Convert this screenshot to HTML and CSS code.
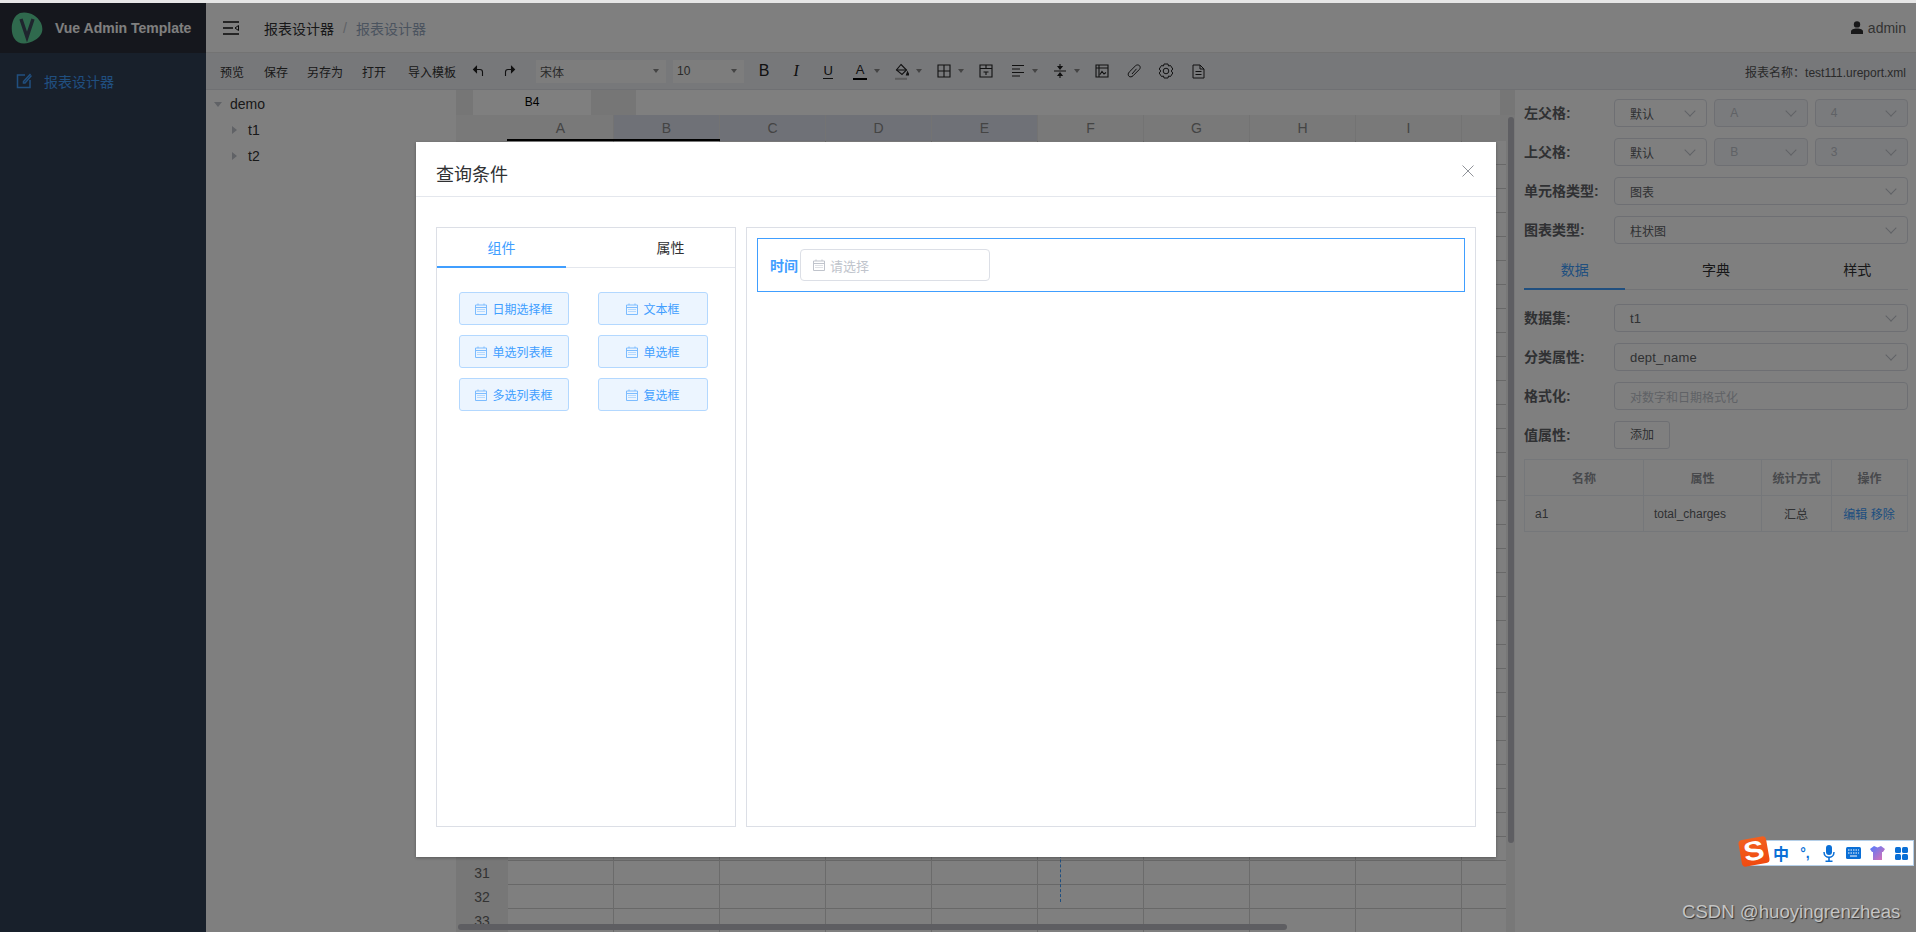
FILE: index.html
```html
<!DOCTYPE html>
<html lang="en">
<head>
<meta charset="UTF-8" />
<meta name="viewport" content="width=device-width, initial-scale=1.0" />
<title>报表设计器</title>
<link rel="stylesheet" href="styles.css">
</head>
<body>
  <div class="top-strip"></div>
  <div class="shell">
    <aside class="sidebar">
      <div class="brand">
        <svg class="brand-logo" width="32" height="32" viewBox="0 0 32 32">
          <path d="M9 1C17 -1 26 3 30 11C33 18 31 24 24 28C16 33 7 33 3 26C-1 19 0 5 9 1Z" fill="#5fd39a"/>
          <path d="M10 7L16 25L22 7" fill="none" stroke="#3f4a5c" stroke-width="3.4"/>
        </svg>
        <span class="brand-name">Vue Admin Template</span>
      </div>
      <div class="side-item">
        <svg width="16" height="16" viewBox="0 0 16 16" fill="none" stroke="#409eff" stroke-width="1.5">
          <path d="M9 2H1.5V14.5H14V7"/>
          <path d="M14.5 1L7.5 8.5V10H9L15.5 2.5"/>
        </svg>
        <span>报表设计器</span>
      </div>
    </aside>

    <main class="main">
      <header class="navbar">
        <svg class="hamburger" width="16" height="14" viewBox="0 0 16 14" fill="none" stroke="#111" stroke-width="1.6">
          <path d="M0 1H16M0 7H10M0 13H16"/>
          <path d="M15.5 4.5L12 7L15.5 9.5Z" stroke-width="1"/>
        </svg>
        <span class="crumb">报表设计器</span>
        <span class="crumb-sep">/</span>
        <span class="crumb crumb-last">报表设计器</span>
        <div class="user">
          <svg width="12" height="13" viewBox="0 0 12 13" fill="#303133">
            <circle cx="6" cy="3.4" r="3.2"/>
            <path d="M0 13V10.5C0 8.5 2.5 7.5 6 7.5C9.5 7.5 12 8.5 12 10.5V13Z"/>
          </svg>
          <span>admin</span>
        </div>
      </header>

      <div class="toolbar">
        <span class="tool-text t-view">预览</span>
        <span class="tool-text t-save">保存</span>
        <span class="tool-text t-saveas">另存为</span>
        <span class="tool-text t-open">打开</span>
        <span class="tool-text t-import">导入模板</span>
        <svg class="tool-undo" width="14" height="14" viewBox="0 0 14 14" fill="none" stroke="#222" stroke-width="1.1">
          <path d="M11.500 12V8C11.500 6.500 10.500 5.500 9 5.500H4"/><path d="M5.500 2.500L2.500 5.500L5.500 8.500Z" fill="#222"/>
        </svg>
        <svg class="tool-redo" width="14" height="14" viewBox="0 0 14 14" fill="none" stroke="#222" stroke-width="1.1">
          <path d="M2.500 12V8C2.500 6.500 3.500 5.500 5 5.500H10"/><path d="M8.500 2.500L11.500 5.500L8.500 8.500Z" fill="#222"/>
        </svg>
        <div class="tool-select font-name"><span>宋体</span><i class="caret"></i></div>
        <div class="tool-select font-size"><span>10</span><i class="caret"></i></div>

        <div class="tool"><span class="glyph">B</span></div>
        <div class="tool"><span class="glyph glyph-i">I</span></div>
        <div class="tool"><span class="glyph glyph-u">U</span></div>
        <div class="tool tool-drop"><span class="glyph glyph-a">A</span><i class="caret"></i></div>
        <div class="tool tool-drop">
          <svg width="14" height="17" viewBox="0 0 14 17" fill="none" stroke="#222" stroke-width="1.1">
            <path d="M6 1.500L11.500 7L7 11.500L1.500 7Z"/><path d="M1.500 7H11.500" /><path d="M12.500 9L14 12H11.500Z" fill="#222"/>
            <path d="M0 15.800H12" stroke="#b8b8b8" stroke-width="2"/>
          </svg><i class="caret"></i>
        </div>
        <div class="tool tool-drop">
          <svg width="14" height="14" viewBox="0 0 14 14" fill="none" stroke="#222" stroke-width="1.1">
            <path d="M1 1H13V13H1ZM7 1V13M1 7H13"/>
          </svg><i class="caret"></i>
        </div>
        <div class="tool">
          <svg width="14" height="14" viewBox="0 0 14 14" fill="none" stroke="#222" stroke-width="1.1">
            <path d="M1 1H13V13H1ZM1 4.500H13M7 1V4.500M4.500 8H9.500M7 8V11"/>
          </svg>
        </div>
        <div class="tool tool-drop">
          <svg width="14" height="14" viewBox="0 0 14 14" fill="none" stroke="#222" stroke-width="1.1">
            <path d="M1 1.500H13M1 5H9M1 8.500H13M1 12H9"/>
          </svg><i class="caret"></i>
        </div>
        <div class="tool tool-drop">
          <svg width="14" height="16" viewBox="0 0 14 16" fill="none" stroke="#222" stroke-width="1.1">
            <path d="M1 8H13M7 1V5M7 11V15"/><path d="M5 3.500L7 6L9 3.500ZM5 12.500L7 10L9 12.500Z" fill="#222"/>
          </svg><i class="caret"></i>
        </div>
        <div class="tool">
          <svg width="14" height="14" viewBox="0 0 14 14" fill="none" stroke="#222" stroke-width="1.1">
            <path d="M1 1H13V13H1ZM1 4H13M4 1V13M5 10.500L7 7.500L9 10L11 8.500"/>
          </svg>
        </div>
        <div class="tool">
          <svg width="14" height="14" viewBox="0 0 14 14" fill="none" stroke="#222" stroke-width="1">
            <path d="M8.500 1.800C9.800 .6 11.500 .7 12.500 1.700C13.500 2.800 13.400 4.400 12.300 5.500L6 11.800C4.800 13 3 13.300 1.900 12.200C.8 11 1 9.300 2.200 8.100L8.500 1.800M5 10L9.500 4.800"/>
          </svg>
        </div>
        <div class="tool">
          <svg width="16" height="16" viewBox="0 0 16 16" fill="none" stroke="#222" stroke-width="1">
            <path d="M6 1H10L10.500 3L12.500 2.500L14.800 6L13.200 8L14.800 10L12.500 13.500L10.500 13L10 15H6L5.500 13L3.500 13.500L1.200 10L2.800 8L1.200 6L3.500 2.500L5.500 3Z"/><circle cx="8" cy="8" r="2.800"/>
          </svg>
        </div>
        <div class="tool">
          <svg width="13" height="15" viewBox="0 0 13 15" fill="none" stroke="#222" stroke-width="1">
            <path d="M1 1H8L12 5V14H1ZM8 1V5H12M3.500 7.500H9.500M3.500 10.500H9.500"/>
          </svg>
        </div>
        <span class="report-name">报表名称：test111.ureport.xml</span>
      </div>

      <div class="workspace">
        <div class="tree">
          <div class="tree-row"><i class="tree-down"></i><span>demo</span></div>
          <div class="tree-row tree-child"><i class="tree-right"></i><span>t1</span></div>
          <div class="tree-row tree-child"><i class="tree-right"></i><span>t2</span></div>
        </div>

        <div class="sheet">
          <div class="name-bar">
            <span class="name-box">B4</span>
            <span class="name-gap"></span>
            <span class="formula"></span>
          </div>
          <div class="col-head">
            <span class="corner"></span>
            <span class="col">A</span>
            <span class="col col-on">B</span>
            <span class="col col-on">C</span>
            <span class="col col-on">D</span>
            <span class="col col-on">E</span>
            <span class="col">F</span>
            <span class="col">G</span>
            <span class="col">H</span>
            <span class="col">I</span>
          </div>
          <div class="grid-wrap">
            <div class="row-nums">
              <span>31</span><span>32</span><span>33</span>
            </div>
            <div class="cells"></div>
          </div>
          <div class="sel-line"></div>
          <div class="dash-line"></div>
          <div class="scroll-v"></div>
          <div class="scroll-h"></div>
        </div>

        <div class="props">
          <div class="prop-row">
            <label>左父格:</label>
            <div class="select"><span>默认</span><i class="chev"></i></div>
            <div class="select is-disabled"><span>A</span><i class="chev"></i></div>
            <div class="select is-disabled"><span>4</span><i class="chev"></i></div>
          </div>
          <div class="prop-row">
            <label>上父格:</label>
            <div class="select"><span>默认</span><i class="chev"></i></div>
            <div class="select is-disabled"><span>B</span><i class="chev"></i></div>
            <div class="select is-disabled"><span>3</span><i class="chev"></i></div>
          </div>
          <div class="prop-row">
            <label>单元格类型:</label>
            <div class="select"><span>图表</span><i class="chev"></i></div>
          </div>
          <div class="prop-row">
            <label>图表类型:</label>
            <div class="select"><span>柱状图</span><i class="chev"></i></div>
          </div>
          <div class="prop-tabs">
            <span class="prop-tab is-active">数据</span>
            <span class="prop-tab">字典</span>
            <span class="prop-tab">样式</span>
          </div>
          <div class="prop-row">
            <label>数据集:</label>
            <div class="select"><span class="latin">t1</span><i class="chev"></i></div>
          </div>
          <div class="prop-row">
            <label>分类属性:</label>
            <div class="select"><span class="latin">dept_name</span><i class="chev"></i></div>
          </div>
          <div class="prop-row">
            <label>格式化:</label>
            <div class="select"><span class="placeholder">对数字和日期格式化</span></div>
          </div>
          <div class="prop-row">
            <label>值属性:</label>
            <div class="add-btn">添加</div>
          </div>
          <table class="value-table">
            <tr><th class="w-name">名称</th><th class="w-attr">属性</th><th class="w-stat">统计方式</th><th>操作</th></tr>
            <tr><td>a1</td><td>total_charges</td><td class="center">汇总</td><td class="center"><a>编辑</a> <a>移除</a></td></tr>
          </table>
        </div>
      </div>
    </main>
  </div>

  <div class="mask"></div>

  <div class="dialog">
    <div class="dialog-head">
      <span class="dialog-title">查询条件</span>
      <svg class="dialog-close" width="12" height="12" viewBox="0 0 12 12" stroke="#909399" stroke-width="1"><path d="M.5 .5L11.500 11.500M11.500 .5L.5 11.500"/></svg>
    </div>
    <div class="dialog-body">
      <div class="panel-left">
        <div class="dlg-tabs">
          <span class="dlg-tab is-active">组件</span>
          <span class="dlg-tab">属性</span>
        </div>
        <div class="comp-grid">
          <div class="comp-btn"><svg class="cal" viewBox="0 0 12 12"><use href="#cal"/></svg>日期选择框</div>
          <div class="comp-btn"><svg class="cal" viewBox="0 0 12 12"><use href="#cal"/></svg>文本框</div>
          <div class="comp-btn"><svg class="cal" viewBox="0 0 12 12"><use href="#cal"/></svg>单选列表框</div>
          <div class="comp-btn"><svg class="cal" viewBox="0 0 12 12"><use href="#cal"/></svg>单选框</div>
          <div class="comp-btn"><svg class="cal" viewBox="0 0 12 12"><use href="#cal"/></svg>多选列表框</div>
          <div class="comp-btn"><svg class="cal" viewBox="0 0 12 12"><use href="#cal"/></svg>复选框</div>
        </div>
      </div>
      <div class="panel-right">
        <div class="form-item">
          <span class="form-label">时间</span>
          <div class="date-input"><svg class="cal cal-gray" viewBox="0 0 12 12"><use href="#cal"/></svg>请选择</div>
        </div>
      </div>
    </div>
  </div>

  <svg class="defs" width="0" height="0">
    <symbol id="cal" viewBox="0 0 12 12">
      <path d="M.5 2H11.500V11.500H.5ZM.5 4.500H11.500M3 .5V2M9 .5V2" fill="none" stroke="currentColor"/>
      <path d="M2.500 6.500H9.500M2.500 8.500H9.500" stroke="currentColor" stroke-dasharray="1 1"/>
    </symbol>
  </svg>

  <div class="ime">
    <div class="ime-logo"><span>S</span></div>
    <span class="ime-item ime-zh">中</span>
    <span class="ime-item ime-punc">°,</span>
    <span class="ime-item"><svg width="12" height="17" viewBox="0 0 12 17" fill="#0a6fd6"><rect x="3" y="0" width="6" height="10" rx="3"/><path d="M1 7C1 14 11 14 11 7" fill="none" stroke="#0a6fd6" stroke-width="1.500"/><path d="M5.200 12H6.800V15.500H5.200ZM2.500 15.500H9.500V17H2.500Z"/></svg></span>
    <span class="ime-item"><svg width="15" height="12" viewBox="0 0 15 12"><rect width="15" height="12" rx="1.500" fill="#0a6fd6"/><path d="M2 3H13M2 6H13" stroke="#fff" stroke-dasharray="1.500 1"/><path d="M4 9H11" stroke="#fff"/></svg></span>
    <span class="ime-item"><svg width="15" height="14" viewBox="0 0 15 14"><defs><linearGradient id="shirt" x1="0" y1="0" x2="1" y2="1"><stop offset="0" stop-color="#4f7bff"/><stop offset="1" stop-color="#e36fb0"/></linearGradient></defs><path d="M4 0L7.500 1.500L11 0L15 3L13 6H12V14H3V6H2L0 3Z" fill="url(#shirt)"/></svg></span>
    <span class="ime-item"><svg width="13" height="13" viewBox="0 0 13 13" fill="#0a6fd6"><rect width="6" height="6" rx="1.500"/><rect x="7" width="6" height="6" rx="1.500"/><rect y="7" width="6" height="6" rx="1.500"/><rect x="7" y="7" width="6" height="6" rx="1.500"/></svg></span>
  </div>
  <div class="watermark">CSDN @huoyingrenzheas</div>
</body>
</html>
```

FILE: styles.css
```css
* { box-sizing: border-box; }
html, body { height: 100%; }
body {
  margin: 0;
  height: 932px;
  overflow: hidden;
  position: relative;
  background: #fff;
  font-family: "Liberation Sans", "Noto Sans CJK SC", sans-serif;
  font-size: 14px;
  color: #303133;
}
i { display: block; font-style: normal; }

.top-strip { height: 3px; background: #e6e6e6; }
.shell { display: flex; height: 929px; }

/* Sidebar */
.sidebar { width: 206px; flex: none; background: #304156; }
.brand {
  height: 50px;
  background: #2b2f3a;
  display: flex;
  align-items: center;
  padding-left: 11px;
  gap: 12px;
}
.brand-name { color: #fff; font-size: 14px; font-weight: bold; white-space: nowrap; }
.side-item {
  display: flex;
  align-items: center;
  height: 56px;
  padding-left: 16px;
  gap: 12px;
  color: #409eff;
}

/* Navbar */
.main { flex: 1; min-width: 0; display: flex; flex-direction: column; }
.navbar {
  height: 50px;
  flex: none;
  display: flex;
  align-items: center;
  padding: 0 10px 0 17px;
  border-bottom: 1px solid #e6e6e6;
  background: #fff;
}
.hamburger { margin-right: 25px; }
.crumb { color: #303133; }
.crumb-sep { color: #c0c4cc; margin: 0 9px; }
.crumb-last { color: #97a8be; }
.user { margin-left: auto; display: flex; align-items: center; gap: 5px; color: #666; font-size: 14px; }

/* Toolbar */
.toolbar {
  height: 37px;
  flex: none;
  display: flex;
  align-items: center;
  padding-left: 14px;
  background: #eef0f5;
  border-bottom: 1px solid #dfe1e6;
  font-size: 12px;
  color: #333;
}
.tool-text { white-space: nowrap; }
.t-view, .t-saveas, .t-open { margin-right: 19px; }
.t-view { margin-right: 20px; }
.t-save { margin-right: 19px; }
.t-open { margin-right: 22px; }
.t-import { margin-right: 15px; }
.tool-undo { margin-right: 18px; flex: none; }
.tool-redo { margin-right: 19px; flex: none; }
.tool-select {
  height: 23px;
  background: #fafafa;
  display: flex;
  align-items: center;
  justify-content: space-between;
  padding: 0 4px;
  color: #555;
  margin-right: 7px;
  flex: none;
}
.font-name { width: 130px; }
.font-size { width: 71px; margin-right: 4px; }
.caret {
  width: 0;
  height: 0;
  border: 3px solid transparent;
  border-top: 4px solid #888;
  border-bottom: 0;
}
.tool-select .caret { margin-right: 3px; }
.tool {
  width: 32px;
  height: 20px;
  flex: none;
  display: flex;
  align-items: center;
  justify-content: center;
}
.tool-drop { width: 42px; justify-content: flex-start; padding-left: 9px; }
.tool-drop .caret { margin-left: 7px; }
.glyph { font-size: 16px; color: #222; line-height: 18px; }
.glyph-i { font-family: "Liberation Serif", serif; font-style: italic; }
.glyph-u { border-bottom: 1px solid #222; line-height: 15px; font-size: 13px; }
.glyph-a { border-bottom: 2px solid #000; line-height: 16px; font-size: 13px; width: 14px; text-align: center; }
.report-name { margin-left: auto; margin-right: 10px; color: #555; white-space: nowrap; font-size: 12px; }

/* Workspace */
.workspace { flex: 1; display: flex; min-height: 0; }
.tree { width: 250px; flex: none; padding-top: 1px; color: #333; background: #fff; }
.tree-row { height: 26px; display: flex; align-items: center; padding-left: 8px; gap: 8px; }
.tree-child { padding-left: 26px; }
.tree-down { width: 0; height: 0; border: 4px solid transparent; border-top: 5px solid #c0c4cc; border-bottom: 0; }
.tree-right { width: 0; height: 0; border: 4px solid transparent; border-left: 5px solid #c0c4cc; border-right: 0; margin-right: 3px; }

/* Sheet */
.sheet { width: 1059px; flex: none; position: relative; overflow: hidden; background: #f0f0f0; }
.name-bar { height: 25px; display: flex; background: #ececec; }
.name-box {
  margin-left: 17px;
  width: 118px;
  background: #fff;
  text-align: center;
  line-height: 24px;
  font-size: 12px;
  color: #000;
}
.name-gap { width: 45px; }
.formula { width: 864px; background: #fff; }
.col-head { display: flex; height: 26px; width: 1044px; background: #f2f2f2; overflow: hidden; }
.corner { width: 52px; flex: none; }
.col {
  width: 106px;
  flex: none;
  text-align: center;
  line-height: 26px;
  font-size: 14px;
  color: #888;
  border-right: 1px solid #e6e6e6;
}
.col-on { background: #dfe3ee; }
.grid-wrap { display: flex; width: 1050px; }
.row-nums { width: 52px; flex: none; background: #eee; padding-top: 720px; height: 792px; }
.row-nums span {
  display: block;
  height: 24px;
  line-height: 24px;
  text-align: center;
  font-size: 14px;
  color: #666;
}
.cells {
  flex: 1;
  height: 792px;
  background-color: #fff;
  background-image:
    repeating-linear-gradient(to right, transparent 0 105px, #d6d6d6 105px 106px),
    repeating-linear-gradient(to bottom, transparent 0 23px, #d0d0d0 23px 24px);
}
.sel-line {
  position: absolute;
  left: 51px;
  top: 49px;
  width: 213px;
  height: 2px;
  background: #000;
}
.dash-line {
  position: absolute;
  left: 604px;
  top: 730px;
  height: 82px;
  border-left: 1px dashed #409eff;
}
.scroll-v {
  position: absolute;
  left: 1052px;
  top: 27px;
  width: 6px;
  height: 726px;
  background: #bcbcc4;
  border-radius: 3px;
}
.scroll-h {
  position: absolute;
  left: 2px;
  top: 834px;
  width: 829px;
  height: 6px;
  background: #bcbcc4;
  border-radius: 3px;
}

/* Properties */
.props { flex: 1; min-width: 0; background: #fff; padding: 9px 8px 0 9px; }
.prop-row { display: flex; align-items: center; gap: 7px; height: 28px; margin-bottom: 11px; }
.prop-row label { width: 83px; padding-bottom: 2px; flex: none; font-weight: bold; color: #606266; white-space: nowrap; }
.select {
  flex: 1;
  height: 28px;
  border: 1px solid #dcdfe6;
  border-radius: 4px;
  background: #fff;
  display: flex;
  align-items: center;
  justify-content: space-between;
  padding: 0 12px 0 15px;
  font-size: 12px;
  color: #606266;
}
.is-disabled { background: #f5f7fa; color: #c0c4cc; }
.placeholder { color: #c0c4cc; }
.latin { font-size: 13px; letter-spacing: 0.2px; }
.chev {
  width: 8px;
  height: 8px;
  border-right: 1px solid #c0c4cc;
  border-bottom: 1px solid #c0c4cc;
  transform: translateY(-2px) rotate(45deg);
}
.prop-tabs { display: flex; gap: 40px; height: 36px; margin-top: -1px; margin-bottom: 14px; border-bottom: 1px solid #e4e7ed; }
.prop-tab { flex: 1; text-align: center; line-height: 32px; font-size: 14px; color: #303133; }
.prop-tab.is-active { color: #409eff; border-bottom: 2px solid #409eff; height: 36px; }
.add-btn {
  width: 56px;
  height: 28px;
  border: 1px solid #dcdfe6;
  border-radius: 3px;
  text-align: center;
  line-height: 26px;
  font-size: 12px;
  color: #606266;
}
.value-table {
  width: 384px;
  border-collapse: collapse;
  font-size: 12px;
  color: #606266;
  margin-top: -1px;
}
.value-table th, .value-table td { border: 1px solid #ebeef5; }
.value-table th { height: 36px; font-weight: bold; color: #909399; text-align: center; }
.value-table td { height: 36px; padding-left: 10px; }
.value-table td.center { padding-left: 0; text-align: center; }
.value-table a { color: #409eff; }
.w-name { width: 119px; }
.w-attr { width: 118px; }
.w-stat { width: 70px; }

/* Dialog */
.mask { position: absolute; left: 0; right: 0; top: 3px; bottom: 0; background: rgba(0,0,0,0.5); }
.dialog {
  position: absolute;
  left: 416px;
  top: 142px;
  width: 1080px;
  height: 715px;
  background: #fff;
  box-shadow: 0 1px 3px rgba(0,0,0,0.3);
  display: flex;
  flex-direction: column;
}
.dialog-head {
  height: 55px;
  flex: none;
  border-bottom: 1px solid #e4e7ed;
  display: flex;
  align-items: center;
  justify-content: space-between;
  padding: 8px 22px 0 20px;
}
.dialog-title { font-size: 18px; color: #303133; }
.dialog-close { margin-top: -4px; }
.dialog-body { flex: 1; min-height: 0; display: flex; gap: 10px; padding: 30px 20px; }
.panel-left { width: 300px; flex: none; border: 1px solid #dcdfe6; }
.panel-right { flex: 1; border: 1px solid #dcdfe6; padding: 10px; }
.dlg-tabs { display: flex; gap: 40px; height: 40px; border-bottom: 1px solid #e4e7ed; }
.dlg-tab { flex: 1; text-align: center; line-height: 40px; font-size: 14px; color: #303133; }
.dlg-tab.is-active { color: #409eff; height: 40px; border-bottom: 2px solid #409eff; }
.comp-grid {
  display: grid;
  grid-template-columns: 110px 110px;
  grid-auto-rows: 33px;
  gap: 10px 29px;
  padding: 24px 0 0 22px;
}
.comp-btn {
  display: flex;
  align-items: center;
  justify-content: center;
  gap: 5px;
  background: #ecf5ff;
  border: 1px solid #b3d8ff;
  border-radius: 3px;
  font-size: 12px;
  color: #409eff;
}
.cal { width: 12px; height: 12px; flex: none; color: #7cbcff; }
.cal-gray { color: #c0c4cc; margin-right: 5px; }
.form-item {
  height: 54px;
  border: 1px solid #409eff;
  display: flex;
  align-items: center;
  padding-left: 12px;
}
.form-label { width: 28px; font-weight: bold; color: #409eff; }
.date-input {
  width: 190px;
  height: 32px;
  margin-left: 2px;
  padding-left: 12px;
  border: 1px solid #dcdfe6;
  border-radius: 4px;
  display: flex;
  align-items: center;
  font-size: 13px;
  color: #c0c4cc;
}
.defs { position: absolute; }

/* IME bar and watermark, on top of the capture */
.ime {
  position: absolute;
  left: 1745px;
  top: 840px;
  width: 169px;
  height: 26px;
  background: #fff;
  border: 1px solid #b5cfe8;
  display: flex;
  align-items: center;
  justify-content: flex-end;
  color: #0a6fd6;
}
.ime-item { width: 24px; flex: none; display: flex; align-items: center; justify-content: center; }
.ime-logo {
  position: absolute;
  left: -6px;
  top: -3px;
  width: 28px;
  height: 27px;
  background: linear-gradient(#f2601f, #f04a10);
  border-radius: 4px;
  transform: rotate(-10deg);
  display: flex;
  align-items: center;
  justify-content: center;
  color: #fff;
  font-weight: bold;
  font-size: 27px;
  line-height: 27px;
}
.ime-logo span { transform: scaleX(1.15); }
.ime-zh { font-size: 16px; font-weight: bold; }
.ime-punc { font-size: 14px; font-weight: bold; }
.watermark {
  position: absolute;
  left: 1682px;
  top: 901px;
  font-size: 18.6px;
  color: #c4c4c4;
  text-shadow: 1px 1px 1px #333;
  white-space: nowrap;
}
```
